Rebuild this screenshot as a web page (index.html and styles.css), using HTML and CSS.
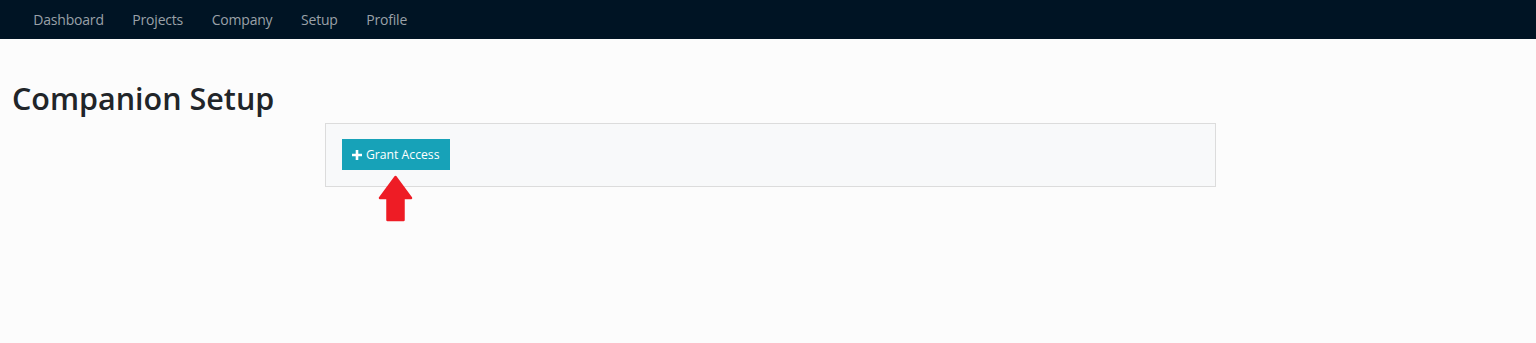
FILE: index.html
```html
<!DOCTYPE html>
<html>
<head>
<meta charset="utf-8">
<link rel="stylesheet" href="styles.css">
</head>
<body>
<nav class="navbar">
  <a class="nav-link" href="#">Dashboard</a>
  <a class="nav-link" href="#">Projects</a>
  <a class="nav-link" href="#">Company</a>
  <a class="nav-link" href="#">Setup</a>
  <a class="nav-link" href="#">Profile</a>
</nav>
<main class="content">
  <h1 class="title">Companion Setup</h1>
  <div class="card-row">
    <div class="card">
      <div class="btn-wrap">
        <button class="btn"><svg class="plus" viewBox="0 0 10 10" width="10" height="10"><path d="M3.7 0h2.6v3.7H10v2.6H6.3V10H3.7V6.3H0V3.7h3.7z" fill="#fff"/></svg>Grant Access</button>
        <svg class="arrow" viewBox="0 0 36 48" width="36" height="48"><path d="M17.5 2L33 23H25.5V45H9.5V23H2z" fill="#ee1c25" stroke="#ee1c25" stroke-width="2.5" stroke-linejoin="round"/></svg>
      </div>
    </div>
  </div>
</main>
</body>
</html>
```
FILE: styles.css
```css
* { box-sizing: border-box; }
html, body { margin: 0; padding: 0; }
body {
  background: #fcfcfc;
  font-family: "Open Sans", "Noto Sans", sans-serif;
  color: #212529;
  height: 343px;
  overflow: hidden;
}
.navbar {
  height: 39px;
  background: #001424;
  display: flex;
  align-items: center;
  padding-left: 19px;
  padding-bottom: 1px;
}
.nav-link {
  color: #9aa1a8;
  text-decoration: none;
  font-size: 14px;
  padding: 0 14.3px;
  letter-spacing: -0.2px;
}
.content { padding: 0 12px; }
.title {
  margin: 41px 0 0 0;
  font-size: 30.5px;
  font-weight: 600;
  line-height: 36px;
  color: #212529;
}
.card-row { padding-left: 313px; margin-top: 7px; }
.card {
  width: 891px;
  height: 64px;
  background: #f8f9fa;
  border: 1px solid #dcdcdc;
  padding: 15px 16px;
}
.btn-wrap { position: relative; width: 108px; }
.btn {
  display: flex;
  align-items: center;
  gap: 4px;
  width: 108px;
  height: 31px;
  background: #17a2b8;
  border: none;
  color: #fff;
  font-family: "Open Sans", sans-serif;
  font-size: 12.2px;
  padding: 0 0 0 10px;
  white-space: nowrap;
}
.plus { flex: none; }
.arrow { position: absolute; left: 36px; top: 36px; }
```
